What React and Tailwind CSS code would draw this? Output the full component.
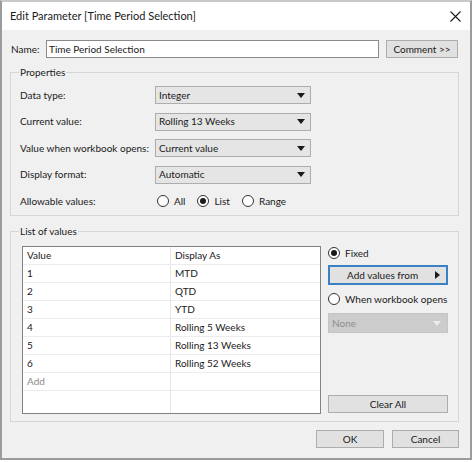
import React from "react";

const font = { fontFamily: 'Lato, "Liberation Sans", sans-serif' };

function Caret({ color = "#1a1a1a" }) {
  return (
    <svg width="8" height="5" viewBox="0 0 8 5" className="shrink-0">
      <path d="M0 0 H8 L4 5 Z" fill={color} />
    </svg>
  );
}

function Select({ value }) {
  return (
    <div className="w-[156px] h-[18px] flex items-center justify-between bg-[#e5e5e5] border border-[#adadad] pl-[3px] pr-[5px] text-[10px] text-[#1a1a1a]">
      <span>{value}</span>
      <Caret />
    </div>
  );
}

function Radio({ checked, label, gap = "gap-[5px]" }) {
  return (
    <div className={`flex items-center ${gap} text-[10px] text-[#1a1a1a] whitespace-nowrap`}>
      <span className="w-[12px] h-[12px] rounded-full border border-[#333] bg-white flex items-center justify-center shrink-0">
        {checked && <span className="w-[6px] h-[6px] rounded-full bg-[#1a1a1a]" />}
      </span>
      <span>{label}</span>
    </div>
  );
}

function Button({ children, className = "" }) {
  return (
    <div className={`h-[18px] flex items-center justify-center bg-[#e1e1e1] border border-[#adadad] text-[10px] text-[#1a1a1a] whitespace-nowrap ${className}`}>
      {children}
    </div>
  );
}

const rows = [
  ["1", "MTD"],
  ["2", "QTD"],
  ["3", "YTD"],
  ["4", "Rolling 5 Weeks"],
  ["5", "Rolling 13 Weeks"],
  ["6", "Rolling 52 Weeks"],
];

export default function App() {
  return (
    <div className="w-[474px] h-[462px] bg-white whitespace-nowrap" style={font}>
      <div className="w-[472px] h-[460px] border-2 border-[#9b9b9b] border-t-[#c8c8c8] flex flex-col">
        {/* Title bar */}
        <div className="h-[28px] bg-white flex items-center justify-between pl-[8px] pr-[9px] shrink-0">
          <span className="text-[11px] text-[#1a1a1a]">Edit Parameter [Time Period Selection]</span>
          <svg width="11" height="11" viewBox="0 0 11 11">
            <path d="M0.5 0.5 L10.5 10.5 M10.5 0.5 L0.5 10.5" stroke="#1a1a1a" strokeWidth="1.1" />
          </svg>
        </div>

        {/* Body */}
        <div className="flex-1 bg-[#f0f0f0] pl-[8px] pr-[11px] pt-[10px] flex flex-col">
          {/* Name row */}
          <div className="h-[18px] flex items-center text-[10px] text-[#1a1a1a]">
            <span className="w-[36px] pl-[1px]">Name:</span>
            <div className="w-[333px] h-[18px] bg-white border border-[#8a8a8a] flex items-center pl-[2px]">
              Time Period Selection
            </div>
            <Button className="ml-[7px] w-[72px]">Comment &gt;&gt;</Button>
          </div>

          {/* Properties */}
          <fieldset className="mt-[7px] border border-[#d6d6d6] pl-[9px] pr-[9px] pb-[5px]">
            <legend className="ml-[-1px] px-[1px] text-[10px] leading-[14px] text-[#1a1a1a]">Properties</legend>
            <div className="pt-[7px] flex flex-col gap-[8.5px] text-[10px] text-[#1a1a1a]">
              <div className="h-[18px] flex items-center">
                <span className="w-[135px]">Data type:</span>
                <Select value="Integer" />
              </div>
              <div className="h-[18px] flex items-center">
                <span className="w-[135px]">Current value:</span>
                <Select value="Rolling 13 Weeks" />
              </div>
              <div className="h-[18px] flex items-center">
                <span className="w-[135px]">Value when workbook opens:</span>
                <Select value="Current value" />
              </div>
              <div className="h-[18px] flex items-center">
                <span className="w-[135px]">Display format:</span>
                <Select value="Automatic" />
              </div>
              <div className="h-[18px] flex items-center">
                <span className="w-[137px]">Allowable values:</span>
                <div className="flex items-center gap-[12px]">
                  <Radio label="All" />
                  <Radio checked label="List" />
                  <Radio label="Range" />
                </div>
              </div>
            </div>
          </fieldset>

          {/* List of values */}
          <fieldset className="mt-[8px] border border-[#d6d6d6] pl-[11px] pr-[9px] pb-[7px]">
            <legend className="ml-[-3px] px-[1px] text-[10px] leading-[14px] text-[#1a1a1a]">List of values</legend>
            <div className="pt-[8px] flex gap-[7px]">
              {/* Table */}
              <div className="w-[299px] h-[168px] bg-white border border-[#828282] text-[10px] text-[#1a1a1a] flex flex-col overflow-hidden">
                {[["Value", "Display As"], ...rows].map(([a, b], i) => (
                  <div key={i} className="h-[18px] flex border-b border-[#ececec] shrink-0">
                    <div className="w-[148px] border-r border-[#e6e6e6] pl-[4px] flex items-center">{a}</div>
                    <div className="flex-1 pl-[4px] flex items-center">{b}</div>
                  </div>
                ))}
                <div className="h-[18px] flex border-b border-[#ececec] shrink-0">
                  <div className="w-[148px] border-r border-[#e6e6e6] pl-[4px] flex items-center text-[#8a8a8a]">Add</div>
                  <div className="flex-1" />
                </div>
                <div className="flex-1 flex">
                  <div className="w-[148px] border-r border-[#e6e6e6]" />
                  <div className="flex-1" />
                </div>
              </div>

              {/* Right column */}
              <div className="w-[120px] h-[168px] flex flex-col">
                <div className="h-[14px] flex items-center">
                  <Radio checked label="Fixed" />
                </div>
                <div className="mt-[5px] h-[20px] flex items-center justify-between bg-[#e1e1e1] border-2 border-[#3b82c4] pl-[15px] pr-[6px] text-[10px] text-[#1a1a1a]">
                  <span className="pl-[2px]">Add values from</span>
                  <svg width="5" height="8" viewBox="0 0 5 8">
                    <path d="M0 0 L5 4 L0 8 Z" fill="#1a1a1a" />
                  </svg>
                </div>
                <div className="mt-[7px] h-[14px] flex items-center">
                  <Radio label="When workbook opens" />
                </div>
                <div className="mt-[7px] h-[20px] flex items-center justify-between bg-[#cccccc] border border-[#c4c4c4] pl-[3px] pr-[6px] text-[10px] text-[#8d8d8d]">
                  <span>None</span>
                  <Caret color="#ececec" />
                </div>
                <Button className="mt-auto mb-[1px] w-[120px]">Clear All</Button>
              </div>
            </div>
          </fieldset>

          {/* Footer */}
          <div className="mt-[8px] flex justify-end gap-[8px]">
            <Button className="w-[68px]">OK</Button>
            <Button className="w-[67px]">Cancel</Button>
          </div>
        </div>
      </div>
    </div>
  );
}
